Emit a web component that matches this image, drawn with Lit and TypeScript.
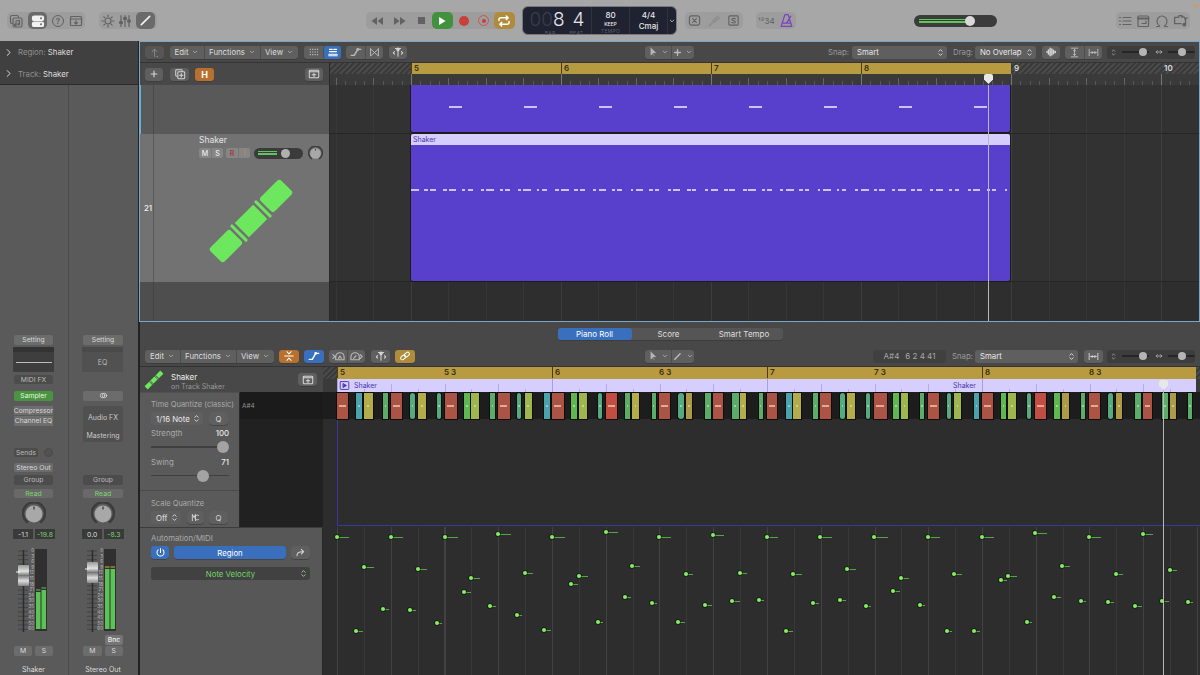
import { LitElement, html, css, svg, unsafeCSS } from "lit";
import { customElement } from "lit/decorators.js";

const util = unsafeCSS(
  Array.from({ length: 260 }, (_, i) => `.ml${i}{margin-left:${i}px}.w${i}{width:${i}px;flex:none}.mt${i}{margin-top:${i}px}`).join("")
);

type N = [number, number, string, number];
const notes: N[] = [
  [337,11,"r",537],[356,5.5,"t",631],[364,8.5,"y",567],[383,5,"g",609],[391,11,"r",537],[410,4.5,"tg",610],[418,7.5,"y",569],[437,4,"tg",623],
  [445,11.5,"r",537],[464,5.5,"bg",592],[471,8,"l",578],[490,5,"g",606],[498,11.5,"r",534],[517,4,"tg",615],[525,6.5,"l",573],[544,5.5,"t",630],
  [552,11.5,"r",537],[571,5.5,"bg",584],[579,7.5,"l",576],[598,4,"tg",622],[606,11,"rb",532],[625,5,"g",597],[632,7,"y",566],[652,3.5,"g",603],
  [659,11,"r",537],[678,5.5,"tg",622],[686,6,"br",574],[705,5.5,"g",605],[713,9.5,"r",535],[732,6.5,"g",601],[740,6,"y",573],[759,3.5,"g",600],
  [767,10,"r",537],[786,5.5,"t",631],[793,8,"y",574],[813,5,"g",603],[820,11,"r",537],[840,4.5,"tg",600],[847,7.5,"y",569],[866,4,"tg",606],
  [874,12.5,"r",537],[893,5.5,"bg",591],[901,7,"l",578],[920,4,"g",605],[928,11,"r",537],[947,3.5,"tg",631],[954,7,"l",574],[974,4.5,"t",631],
  [982,11,"r",537],[1001,4.5,"bg",580],[1008,8,"l",576],[1027,4,"tg",622],[1035,11,"rb",533],[1054,5.5,"bg",597],[1062,7,"br",566],[1081,4,"g",601],
  [1089,11,"r",537],[1108,5,"tg",602],[1116,6,"br",574],[1135,5.5,"g",606],[1143,9,"r",534],[1162,5.5,"g",601],[1170,5.5,"br",570],[1188,4,"g",602],
];
const S = 150 / 215;
const mapX = (x: number) => 81 + (x - 337) * S;
const scale = [0,3,6,9,12,15,18,21,24,30,35,40,45,50,60];

const i = (content: any, w = 12, vb = "0 0 14 14") => html`<svg class="ic" width=${w} height=${w} viewBox=${vb} fill="none" stroke="currentColor" stroke-width="1.2" stroke-linecap="round" stroke-linejoin="round">${content}</svg>`;

const ic = {
  library: i(svg`<rect x="1.5" y="1.5" width="8" height="8" rx="1.5"/><rect x="4" y="4" width="9" height="9" rx="1.5" fill="#9d9d9d"/><path d="M7 11V7l3.5-.7v3.7"/><circle cx="6.2" cy="11" r=".8" fill="currentColor"/><circle cx="9.7" cy="10.2" r=".8" fill="currentColor"/>`, 14),
  toggles: i(svg`<rect x="1.5" y="2" width="11" height="4.5" rx="1.6" fill="currentColor"/><rect x="1.5" y="8" width="11" height="4.5" rx="1.6" fill="currentColor"/><circle cx="10" cy="4.2" r="1" fill="#6a6a6a" stroke="none"/><circle cx="10" cy="10.2" r="1" fill="#6a6a6a" stroke="none"/>`, 14),
  tray: i(svg`<rect x="1.5" y="2.5" width="11" height="9" rx="1"/><path d="M1.5 5h11M7 6.5v3.5M5.5 8.7 7 10.2l1.5-1.5"/>`, 14),
  sun: i(svg`<circle cx="7" cy="7" r="3"/><path d="M7 1v1.6M7 11.4V13M1 7h1.6M11.4 7H13M2.8 2.8l1.1 1.1M10.1 10.1l1.1 1.1M2.8 11.2l1.1-1.1M10.1 3.9l1.1-1.1"/>`, 14),
  mixer: i(svg`<path d="M3 1.5v11M7 1.5v11M11 1.5v11"/><rect x="1.8" y="7.5" width="2.4" height="2" fill="currentColor"/><rect x="5.8" y="3.5" width="2.4" height="2" fill="currentColor"/><rect x="9.8" y="6" width="2.4" height="2" fill="currentColor"/>`, 14),
  pencil: i(svg`<path d="M2.5 11.5 11.5 2.5" stroke-width="1.8"/>`, 13),
  rew: i(svg`<path d="M7 3 1.5 7 7 11zM13 3 7.5 7l5.5 4z" fill="currentColor" stroke="none"/>`, 14),
  ffw: i(svg`<path d="M1 3l5.5 4L1 11zM7 3l5.5 4L7 11z" fill="currentColor" stroke="none"/>`, 14),
  stop: i(svg`<rect x="2.5" y="2.5" width="9" height="9" rx=".8" fill="currentColor" stroke="none"/>`, 11),
  play: i(svg`<path d="M3 1.5 12 7l-9 5.5z" fill="currentColor" stroke="none"/>`, 10),
  cycle: i(svg`<path d="M2 6.5V5.2C2 4.2 2.8 3.8 3.6 3.8H11M9.3 2l1.9 1.8L9.3 5.6M12 7.5v1.3c0 1-.8 1.4-1.6 1.4H3M4.7 12l-1.9-1.8L4.7 8.4" stroke-width="1.5"/>`, 14),
  xbox: i(svg`<path d="M3 2h8l1.5 1.5v7L11 12H3l-1.5-1.5v-7z"/><path d="M5 5l4 4M9 5l-4 4"/>`, 13),
  fork: i(svg`<path d="M2 12 6.5 7.5M6 6l2 2M7 5.5 11.5 2M8.5 7 12.5 4"/>`, 14),
  sbox: i(svg`<rect x="2" y="2" width="10" height="10" rx="1"/><path d="M9 5.2C8.5 4.6 5.2 4.3 5.2 5.8S9 7.2 9 8.6 6 9.8 5 9"/>`, 13),
  metro: i(svg`<path d="M5.5 1.5h3L12 12.5H2zM3.5 9.5h7M7 9.5 11 3"/>`, 15),
  list: i(svg`<path d="M5 3.5h8M5 7h8M5 10.5h8M1.5 3.5h1M1.5 7h1M1.5 10.5h1"/>`, 14),
  panel: i(svg`<rect x="2" y="2" width="10.5" height="10.5" rx="1"/><path d="M2 4.5h10.5" stroke-width="2"/><path d="M6 9.5h4V7"/>`, 14),
  loops: i(svg`<path d="M4 12.5h-2.5M12.5 12.5H10M4.6 12C3 11 2 9.500 2 7.500 2 4.500 4.200 2 7 2s5 2.500 5 5.500c0 2-1 3.500-2.600 4.500"/>`, 14),
  browser: i(svg`<path d="M1.500 4h4V2.500h3V4M1.500 4v6h6"/><circle cx="10.500" cy="10.800" r="1.200" fill="currentColor"/><path d="M11.700 10.800V5l1.500-.5"/><path d="M8 3.500c2-.5 3 .5 3 2" />`, 15),
  up: i(svg`<path d="M7 12V3M4 6l3-3.500L10 6"/><path d="M9.500 12H11" />`, 11),
  grid: i(svg`<path d="M2 4h10M2 7h10M2 10h10" stroke-dasharray="1.400 1.400" stroke-width="1.300" stroke-linecap="butt"/>`, 12),
  lines: i(svg`<path d="M2 9.500h10M2 11.500h10" stroke-width="1.200"/><path d="M3 4h3M8 4h3M3 6.500h8" stroke-width="1.600"/>`, 12),
  auto: i(svg`<path d="M1.500 11H5L9 4h3.500" stroke-width="1.600"/><circle cx="9" cy="4" r="1" fill="currentColor"/>`, 12),
  flex: i(svg`<path d="M2 2.500v9L7 7 2 2.500ZM12 2.500v9L7 7l5-4.500Z"/>`, 11),
  catch: i(svg`<path d="M7 2v10M4 3h6M3 6.500 1.500 8 3 9.500M11 6.500 12.500 8 11 9.500"/><circle cx="7" cy="4" r="1.400" fill="currentColor"/>`, 12),
  arrow: i(svg`<path d="M4 1.500v10l2.700-2.500 2 3.500M4 1.500l7 6.500H7" fill="currentColor" stroke-width=".6"/>`, 10),
  cross: i(svg`<path d="M7 2.500v9M2.500 7h9" stroke-width="2"/>`, 9),
  pen2: i(svg`<path d="M2.500 11.500 10 4" stroke-width="2"/>`, 10),
  chev: i(svg`<path d="M4 5.500 7 8.500l3-3" stroke-width="1.300"/>`, 8),
  updown: i(svg`<path d="M4.500 5 7 2.500 9.500 5M4.500 9 7 11.500 9.500 9" stroke-width="1.300"/>`, 9),
  right: i(svg`<path d="M5 2.500 9.500 7 5 11.500" stroke-width="1.500"/>`, 9),
  plus: i(svg`<path d="M7 3v8M3 7h8" stroke-width="1.600"/>`, 10),
  dup: i(svg`<rect x="2" y="2" width="7.500" height="7.500" rx="1"/><rect x="4.500" y="4.500" width="8" height="8" rx="1" fill="#5f5f5f"/><path d="M8.500 6.500v4M6.500 8.500h4"/>`, 12),
  addbox: i(svg`<rect x="1.500" y="2.500" width="11" height="9" rx="1"/><path d="M1.500 4.500h11M7 6v4M5 8h4"/>`, 12),
  midi: i(svg`<path d="M1 5l2 2-2 2M4 10.500V7.500a4.500 4.500 0 0 1 9 0v3H4zM7 9l1.500-2.500L10 9"/>`, 13),
  midi2: i(svg`<path d="M1 10.500V7.500a4.500 4.500 0 0 1 9 0v3H1zM4 9l2.500-3M11 5l2 2-2 2"/>`, 13),
  fit: i(svg`<path d="M1.500 3v8M12.500 3v8M3.500 7h7M8.500 5.500 10 7 8.500 8.500M5.500 5.500 4 7l1.500 1.500" />`, 11),
  vfit: i(svg`<path d="M3 1.500h8M3 12.500h8M7 3v8M5.500 5 7 3.500 8.500 5M5.500 9 7 10.500 8.500 9" />`, 11),
  wave: i(svg`<path d="M2 7h.5M4 4.500v5M6 2.500v9M8 3.500v7M10 5v4M12 6.500v1" stroke-width="1.700"/>`, 12),
  vzoom: i(svg`<path d="M5 5 7 3l2 2M5 9l2 2 2-2" />`, 9),
  hzoom: i(svg`<path d="M5 5 3 7l2 2M9 5l2 2-2 2M3 7h8"/>`, 10),
  compress: i(svg`<path d="M2 7h10M4.500 2 7 4.500 9.500 2M4.500 12 7 9.500 9.500 12" />`, 12),
  link: i(svg`<rect x="1.500" y="6.500" width="6.500" height="4" rx="2" transform="rotate(-40 5 8.500)"/><rect x="6" y="3.500" width="6.500" height="4" rx="2" transform="rotate(-40 9 5.500)"/>`, 12),
  power: i(svg`<path d="M7 2v5M4 3.700a4.500 4.500 0 1 0 6 0" stroke-width="1.300"/>`, 11),
  share: i(svg`<path d="M2.500 11c0-3.500 2.500-5 7-5M8 3l3 3-3 3" stroke-width="1.300"/>`, 11),
  scaleq: i(svg`<path d="M3 11V3l2 4 2-4v8" /><path d="M11 4.500a3 3 0 1 0 0 5" stroke-dasharray="1 1"/>`, 11),
  region: i(svg`<rect x="1.500" y="2" width="11" height="10" rx="1"/><path d="M5.500 4.700 9.500 7l-4 2.300z" fill="currentColor"/>`, 11),
};

const shaker = (size: number) => html`<svg class="shk" width=${size} height=${size} viewBox="-45 -45 90 90"><g fill="#6de85e" transform="rotate(-45)">
  <rect x="-50" y="-10" width="29" height="20" rx="3"/><rect x="-18.500" y="-11.500" width="3" height="23" rx="1.500"/>
  <rect x="-13" y="-10" width="26" height="20"/><rect x="15.500" y="-11.500" width="3" height="23" rx="1.500"/>
  <rect x="21" y="-10" width="29" height="20" rx="3"/></g></svg>`;

const knob = (s: number) => html`<svg width=${s} height=${s} viewBox="0 0 24 24"><path d="M6 20.500A11 11 0 1 1 18 20.500" fill="none" stroke="#3c3c3c" stroke-width="2.500"/><circle cx="12" cy="12" r="8.500" fill="#a8a8a8"/><path d="M12 4.500v3" stroke="#333" stroke-width="1.200"/></svg>`;

@customElement("app-root")
export class AppRoot extends LitElement {
  static styles = [util, css`
    :host{display:block;width:1200px;height:675px;overflow:hidden;background:#2d2d2d;font-family:Inter,"Liberation Sans",sans-serif;font-size:8.500px;color:#e4e4e4;-webkit-font-smoothing:antialiased}
    *{box-sizing:border-box}
    svg{display:block;flex:none}
    .top{height:41px;background:#a7a7a7;display:flex;align-items:center;color:#626262;position:relative}
    .tg{height:17px;background:#9d9d9d;border-radius:5px;display:flex;align-items:center;justify-content:space-around;flex:none}
    .ti{height:17px;display:flex;align-items:center;justify-content:center;border-radius:5px;flex:none}
    .sel{background:#6a6a6a;color:#f2f2f2}
    .green{background:#43913f;color:#fff}.gold{background:#b08b3c;color:#fff}
    .q{width:12px;height:12px;border:1.200px solid #626262;border-radius:50%;font-size:8px;display:flex;align-items:center;justify-content:center;font-weight:600}
    .rec{width:10px;height:10px;border-radius:50%;background:#c9403a}
    .cap{width:11px;height:11px;border-radius:50%;border:1.200px solid #d2544c;display:flex;align-items:center;justify-content:center}
    .cap i{width:4px;height:4px;border-radius:50%;background:#c9403a;display:block}
    .lcd{height:29px;background:#1f2230;border:1px solid #77797f;border-radius:6px;display:flex;flex:none;color:#e6e6ea;position:relative}
    .lcd .sec{display:flex;flex-direction:column;align-items:center;justify-content:flex-start;border-right:1px solid #30333f;padding-top:3px;flex:none}
    .lcd .big{display:flex;font-size:19px;font-weight:300;line-height:20px;height:21px}
    .dim{color:#3a3d4d}
    .lab{font-size:5px;letter-spacing:.3px;color:#5a5d6c;line-height:6px}
    .lcd .t{font-size:8px;font-weight:500;line-height:10px}
    .lcd .k{font-size:5px;font-weight:500;line-height:8px}
    .lcd .chev{display:flex;align-items:center;flex:1;justify-content:center;color:#ddd}
    .nums{font-size:8px;letter-spacing:.2px}
    .vol{height:12px;background:#3b3b3b;border-radius:6px;position:relative;flex:none;padding:4px 0 0 5px}
    .vol b{display:block;height:1.500px;background:#62c45c;margin-bottom:1px}
    .vol .kn{position:absolute;border-radius:50%;background:#d8d8d8;width:10px;height:10px;top:1px;left:51px}
    .orange{position:absolute;right:3px;top:4px;width:3px;height:3px;border-radius:50%;background:#e8962e}

    .body{display:grid;grid-template-columns:139px 1061px;height:634px}
    .left{display:flex;flex-direction:column;background:#5a5a5a;border-right:1px solid #222;width:139px}
    .rg{height:22px;background:#404040;display:flex;align-items:center;padding-left:4px;gap:5px;color:#ddd;flex:none;font-size:7.800px}
    .rg span span{color:#8f8f8f}
    .rg+.rg{border-bottom:1px solid #2c2c2c}
    .strips{flex:1;display:grid;grid-template-columns:69px 70px}
    .strip{padding:250px 15px 0 14px;display:flex;flex-direction:column;border-right:1px solid #4a4a4a;min-width:0}
    .strip+.strip{border-right:none;padding-left:14px;padding-right:16px}
    .sb{height:9.500px;background:#6c6c6c;border-radius:2px;font-size:6.800px;display:flex;align-items:center;justify-content:center;color:#d8d8d8;flex:none;white-space:nowrap}
    .sb.dk{background:#505050;color:#c8c8c8}
    .sb.sm{background:#4c4c4c;color:#bbb}
    .sb.gr{background:#48943f;color:#e8f5e0}
    .sb.rd{background:#696969;color:#79d86b}
    .slot{height:25px;background:#3e3e3e;display:flex;flex-direction:column;flex:none;margin:2px 0 0 -1px;width:41px}
    .slot u{height:5px;background:#333;margin-bottom:1px;display:block}
    .slot div{flex:1;display:flex;align-items:center;justify-content:center;font-size:7px;color:#bbb}
    .slot div s{display:block;width:36px;height:1px;background:#bbb}
    .slot.lt{background:#515151}.slot.lt u{background:#4a4a4a}
    .fx{height:36px;flex:none;display:flex;flex-direction:column}
    .fx .sb{border-radius:0;background:#6e6e6e}
    .fxb{height:36px;background:#505050;border-radius:2px;display:flex;flex-direction:column;justify-content:space-between;align-items:center;padding:7px 0 2px;font-size:7px;color:#c8c8c8;flex:none}
    .sends{height:21px;flex:none;display:flex;flex-direction:column;padding-top:6px}
    .sendr{display:flex;align-items:center;gap:3px}
    .dot{width:9px;height:9px;border-radius:50%;background:#525252;border:1px solid #4a4a4a;margin-left:3px}
    .gap{height:9.500px;flex:none}
    .knw{display:flex;justify-content:center;height:24px;margin-top:4px;flex:none}
    .vals{display:flex;gap:1.500px;margin-top:3px;margin-left:-1px;width:42px;flex:none}
    .vals span{flex:1;height:10px;background:#3a3a3a;font-size:6.800px;display:flex;align-items:center;justify-content:center;color:#ddd}
    .vals .g{color:#79d86b}
    .ms{display:flex;gap:3px;flex:none}
    .ms .sb{flex:1}
    .sname{font-size:7px;text-align:center;color:#ddd;margin-top:9px;white-space:nowrap;margin-left:-8px;margin-right:-8px}
    .fm{height:86px;margin-top:9px;flex:none;margin-left:-14px}
    .bncw{height:11px;display:flex;justify-content:flex-end;margin-top:1px;flex:none}
    .bnc{width:18px;background:#757575;color:#eee;font-weight:500}

    .right{display:flex;flex-direction:column;min-width:0}
    .arr{height:281px;border:1px solid #7ba6c8;display:flex;flex-direction:column;flex:none}
    .tb{display:flex;align-items:center;background:#484848;flex:none;color:#d8d8d8;font-size:7.800px}
    .arr .tb{height:21px;border-bottom:1px solid #343434;padding-left:5px}
    .b{height:13px;background:#5f5f5f;border-radius:3px;display:flex;align-items:center;justify-content:center;flex:none;color:#d5d5d5;box-shadow:0 .500px 0 #333}
    .b.dim2{color:#888;background:#555}
    .seg{display:flex;align-items:center;height:13px;background:#5f5f5f;border-radius:3px;flex:none;box-shadow:0 .500px 0 #333}
    .seg>*{height:13px;display:flex;align-items:center;justify-content:center;border-left:1px solid #4d4d4d;flex:none;color:#ddd;gap:3px;white-space:nowrap}
    .seg>*:first-child{border-left:none}
    .seg svg.ic{color:#bbb}
    .seg>.blue svg.ic{color:#fff}
    .blue{background:#3a6fbd;border-radius:3px;color:#fff}
    .b.blue{background:#3a6fbd;color:#fff}.b.or{background:#b8702f;color:#fff;font-weight:700;font-size:9px}.b.gd{background:#b08b3c;color:#fff}
    .lbl{color:#9a9a9a;flex:none;white-space:nowrap}
    .sel-box{height:13px;background:#5f5f5f;border-radius:3px;display:flex;align-items:center;justify-content:space-between;padding:0 2px 0 5px;flex:none;color:#e8e8e8;white-space:nowrap;font-size:7.800px}
    .zg{height:13px;background:#3d3d3d;border-radius:3px;display:flex;align-items:center;flex:none;color:#aaa;padding-left:2px}
    .tr{position:relative;height:2px;background:#262626;border-radius:1px;flex:none}
    .tr i{position:absolute;width:8px;height:8px;border-radius:50%;background:#b5b5b5;top:-3px}
    .ag{display:grid;grid-template-columns:190px 869px;grid-template-rows:22px 236px;flex:none}
    .th0{background:#484848;display:flex;align-items:center;padding-left:5px;border-right:1px solid #2a2a2a;color:#ddd}
    .trks{display:grid;grid-template-rows:49px 148px 39px;border-right:1px solid #2a2a2a}
    .t1{background:#595959;display:grid;grid-template-columns:1px 13px 1fr}
    .t1 .bar{background:#62b3de}
    .t1 .num{border-right:1px solid #4a4a4a}
    .t2{background:#727272;display:flex}
    .t2 .no{width:14px;flex:none;border-right:1px solid #5a5a5a;display:flex;align-items:center;justify-content:center;padding-left:3px;color:#eee;font-weight:500;font-size:8px}
    .t2 .cont{padding:1px 0 0 45px;display:flex;flex-direction:column}
    .t2 .hd{display:flex;align-items:center;margin-top:3px;height:10px}
    .mini{height:10px;background:#868686;display:flex;border-radius:2px;flex:none}
    .mini span{width:12px;font-size:7px;display:flex;align-items:center;justify-content:center;color:#eee;font-weight:500;border-left:1px solid #777}
    .mini span:first-child{border-left:none}
    .t2 .shk{margin:18px 0 0 7px}
    .t3{background:#4e4e4e;display:flex}
    .t3 i{width:14px;border-right:1px solid #454545;display:block}
    .tvol{height:11px;width:49px;background:#3b3b3b;border-radius:6px;position:relative;padding:3px 0 0 4px;flex:none;margin-left:4px}
    .tvol b{display:block;height:1.500px;width:19px;background:#62c45c;margin-bottom:1px}
    .tvol i{position:absolute;width:9px;height:9px;top:1px;left:27px;border-radius:50%;background:#b0b0b0}
    .rul{position:relative;background:#3a3a3a;display:flex;flex-direction:column;overflow:hidden}
    .hatch{height:11px;background:repeating-linear-gradient(135deg,#3a3a3a 0 2px,#4a4a4a 2px 4px);position:relative;flex:none}
    .goldb{position:absolute;background:#b89a41;top:0;bottom:0}
    .rl{position:absolute;top:0;font-size:8px;line-height:11px;font-weight:600;color:#d8d8d8;padding-left:2px;border-left:1px solid #3c3c3c;height:11px}
    .rl.on{color:#3a2e10;border-left-color:#4a3c16}
    .ticks{flex:1;background:
      repeating-linear-gradient(90deg,transparent 0 81px,#777 81px 82px,transparent 82px 150px),
      repeating-linear-gradient(90deg,transparent 0 6px,#646464 6px 7px,transparent 7px 37.5px) 0 100%/100% 7px no-repeat,
      repeating-linear-gradient(90deg,transparent 0 6px,#575757 6px 7px,transparent 7px 9.375px) 0 100%/100% 4px no-repeat}
    .tl{position:relative;background:
      repeating-linear-gradient(90deg,transparent 0 81px,#3d3d3d 81px 82px,transparent 82px 150px),
      repeating-linear-gradient(90deg,transparent 0 6px,#363636 6px 7px,transparent 7px 37.5px),
      #2e2e2e;display:grid;grid-template-rows:49px 148px 39px;overflow:hidden}
    .tl .shade{background:rgba(255,255,255,.02);border-bottom:1px solid #262626}
    .reg{position:absolute;left:81px;width:599px;background:#5840cc;border-radius:2px;overflow:hidden;box-shadow:0 0 0 1px #1c1c1c}
    .r1{top:0;height:47px;border-radius:0 0 2px 2px}.r2{top:49px;height:147px}
    .rhead{height:11px;background:#d6cefc;color:#4a37ad;font-size:7px;line-height:11px;padding-left:2px}
    .dash{position:absolute;height:1.500px;background:#cbc3f3}
    .ph{position:absolute;width:1px;background:#b8b8b8;z-index:3}
    .cap2{position:absolute;z-index:4;width:9px;height:10px;background:#e8e8e8;clip-path:polygon(0 0,100% 0,100% 55%,50% 100%,0 55%);border-radius:2px 2px 0 0}

    .ed{flex:1;display:flex;flex-direction:column;background:#484848;border-left:1px solid #222}
    .tabs{height:24px;display:flex;align-items:center;justify-content:center;flex:none}
    .tabs .seg{height:12px;background:#555}
    .tabs .seg>*{height:12px;font-size:8px;border-left:none}
    .tabs .seg>.blue{color:#fff}
    .ed .tb{height:21px;padding-left:5px;border-bottom:1px solid #333}
    .posd{height:13px;background:#404040;border-radius:3px;display:flex;align-items:center;justify-content:center;gap:6px;color:#a8a8a8;flex:none;font-size:8px}
    .eg{display:grid;grid-template-columns:100px 83px 877px;grid-template-rows:25px 135px 148px;position:relative;flex:none}
    .eh{grid-column:1/3;background:#484848;display:flex;align-items:center;padding-left:4px;position:relative}
    .eh .nm{margin-left:7px;display:flex;flex-direction:column;padding-top:3px}
    .eh .nm b{font-weight:400;color:#eee;line-height:10px;font-size:8px}
    .eh .nm span{font-size:7px;color:#999;line-height:9px}
    .eh .b{margin-left:auto;margin-right:6px;width:19px}
    .er{display:flex;flex-direction:column;position:relative;overflow:hidden;background:#3a3a3a}
    .er .hatch{height:12px}
    .band{height:13px;margin-left:14px;width:859px;background:
      repeating-linear-gradient(90deg,#a9a0dd 0 1px,transparent 1px 215px),
      repeating-linear-gradient(90deg,#b4aee0 0 1px,transparent 1px 53.75px) 0 100%/100% 8px no-repeat,
      repeating-linear-gradient(90deg,#b4aee0 0 1px,transparent 1px 26.875px) 0 100%/100% 3px no-repeat,
      #d6cefc;color:#4a37ad;font-size:7px;display:flex;align-items:center;padding-left:2px;position:relative}
    .band .ic{color:#4a37ad}
    .band .sn{margin-left:4px}
    .band .sn2{position:absolute;left:616px}
    .qp{background:#5a5a5a;padding:7px 0 0 11px;display:flex;flex-direction:column;color:#aaa;border-top:1px solid #505050;border-right:1px solid #2a2a2a;overflow:hidden}
    .qp>*{flex:none}
    .qp .ttl{font-size:7.500px;line-height:9px;white-space:nowrap}
    .qrow{display:flex;align-items:center;margin-top:3px;color:#ddd;font-size:7.800px}
    .kv{display:flex;justify-content:space-between;width:78px;line-height:10px;font-size:7.800px}
    .kv b{color:#e6e6e6;font-weight:500}
    .sl{position:relative;height:1.500px;width:78px;background:#3f3f3f;flex:none}
    .sl i{position:absolute;width:12px;height:12px;top:-5px;border-radius:50%;background:#a3a3a3;display:block}
    .qdiv{height:1px;background:#4a4a4a;margin-left:-11px;width:99px}
    .keys{background:#212121;display:flex;flex-direction:column}
    .keys div{height:27px;background:#1b1b1b;color:#8f8f8f;font-size:6.500px;display:flex;align-items:center;padding-left:2px}
    .roll{position:relative;background:#2d2d2d;overflow:hidden}
    .rtop{height:27px;background:#1d1d1d}
    .fr{position:absolute;left:14px;top:27px;right:0;height:107px;border:1px solid #3f35a0;border-width:0 0 1px 1px}
    .n{position:absolute;top:1px;height:26px;box-shadow:0 0 0 1px #0e0e0e}
    .n::after{content:"";position:absolute;left:36%;right:36%;top:12px;height:2px;background:rgba(255,255,255,.42)}
    .n.r{background:#ab5344}.n.rb{background:#c04e43}.n.t{background:#4aa3ab}.n.tg{background:#55aa80}.n.g{background:#5aac68}.n.bg{background:#5fb84f}.n.y{background:#b2ac4b}.n.l{background:#9fb54e}.n.br{background:#ad9a48}
    .n.r::after,.n.rb::after{left:18%;right:18%;background:rgba(255,215,200,.65)}
    .aut{grid-column:1/3;background:#575757;padding:5px 0 0 11px;display:flex;flex-direction:column;color:#aaa;border-right:1px solid #262626;border-top:1px solid #3c3c3c}
    .aut .ttl{font-size:7.800px;line-height:10px}
    .nv{height:13px;width:159px;margin-top:8px;background:#414141;border-radius:3px;display:flex;align-items:center;color:#72d565;position:relative;justify-content:center;font-size:7.800px}
    .nv svg{position:absolute;right:2px;color:#a5d99e}
    .vel{position:relative;overflow:hidden;background:
      repeating-linear-gradient(90deg,transparent 0 14px,#424242 14px 15px,transparent 15px 53.75px),
      repeating-linear-gradient(90deg,transparent 0 14px,#383838 14px 15px,transparent 15px 26.875px),
      #2d2d2d}
    .vl{position:absolute;height:1.200px;background:#58a24a}
    .vl::before{content:"";position:absolute;left:-2px;top:-1.400px;width:4px;height:4px;border-radius:50%;background:#82f05f;box-shadow:0 0 0 1px rgba(0,0,0,.35)}
  `];

  private strip1() {
    return html`<div class="strip">
      <div class="sb">Setting</div>
      <div class="slot"><u></u><div><s></s></div></div>
      <div class="sb sm mt3">MIDI FX</div>
      <div class="sb gr mt7">Sampler</div>
      <div class="fx mt5"><div class="sb">Compressor</div><div class="sb mt1">Channel EQ</div></div>
      <div class="sends"><div class="sendr"><div class="sb sm w24">Sends</div><div class="dot"></div></div></div>
      <div class="sb">Stereo Out</div>
      <div class="sb sm mt3">Group</div>
      <div class="sb rd mt4">Read</div>
      <div class="knw">${knob(24)}</div>
      <div class="vals"><span>-1.1</span><span class="g">-19.8</span></div>
      ${this.faderMeter(37, 39)}
      <div class="bncw"></div>
      <div class="ms"><div class="sb">M</div><div class="sb">S</div></div>
      <div class="sname">Shaker</div>
    </div>`;
  }
  private strip2() {
    return html`<div class="strip">
      <div class="sb">Setting</div>
      <div class="slot lt"><u></u><div>EQ</div></div>
      <div class="gap mt3"></div>
      <div class="sb mt7">${i(svg`<circle cx="5.500" cy="7" r="3.500"/><circle cx="8.500" cy="7" r="3.500"/>`, 9)}</div>
      <div class="fxb mt5"><span>Audio FX</span><span>Mastering</span></div>
      <div class="sends"></div>
      <div class="gap"></div>
      <div class="sb sm mt3">Group</div>
      <div class="sb rd mt4">Read</div>
      <div class="knw">${knob(24)}</div>
      <div class="vals"><span>0.0</span><span class="g">-8.3</span></div>
      ${this.faderMeter(60, 60)}
      <div class="bncw"><div class="sb bnc">Bnc</div></div>
      <div class="ms"><div class="sb">M</div><div class="sb">S</div></div>
      <div class="sname">Stereo Out</div>
    </div>`;
  }
  private faderMeter(a: number, b: number) {
    const capY = a === 37 ? 17 : 14;
    const ticks = Array.from({ length: 19 }, (_, k) => 3 + k * 4.35);
    return html`<svg class="fm" width="55" height="86" viewBox="0 0 55 86">
      ${ticks.map((y) => svg`<path d="M18 ${y}h10" stroke="#3c3c3c" stroke-width=".8"/>`)}
      <path d="M23.500 2v82" stroke="#2c2c2c" stroke-width="1.500"/>
      <defs><linearGradient id="fc" x1="0" y1="0" x2="0" y2="1"><stop offset="0" stop-color="#999"/><stop offset=".3" stop-color="#e0e0e0"/><stop offset=".5" stop-color="#777"/><stop offset=".75" stop-color="#ddd"/><stop offset="1" stop-color="#888"/></linearGradient></defs>
      <rect x="18" y=${capY} width="11" height="21" rx="1" fill="url(#fc)"/>
      <path d="M16 ${capY + 7}h4" stroke="#eee"/>
      <rect x="35" y="1" width="12" height="82" fill="#303030"/>
      <rect x="36" y=${81 - a} width="4.500" height=${a} fill="#5cc456"/>
      <rect x="41.500" y=${81 - b} width="4.500" height=${b} fill="#5cc456"/>
      <path d="M36 ${79 - a}h4.500M41.500 ${79 - b}h4.500" stroke=${a > 50 ? "#d8b23e" : "#5cc456"} stroke-width="1"/>
      ${scale.map((s, k) => svg`<text x="34" y=${4 + k * 5.6} text-anchor="end" font-size="4.500" fill="#bdbdbd">${s}</text>`)}
    </svg>`;
  }
  private zoomGroup() {
    return html`<div class="zg w88">
      <span>${ic.vzoom}</span><div class="tr w27 ml4"><i style="left:17px"></i></div>
      <span class="ml5">${ic.hzoom}</span><div class="tr w27 ml4"><i style="left:10px"></i></div>
    </div>`;
  }
  private toolGroup(b: any) {
    return html`<div class="seg w49"><span class="w26">${ic.arrow}${ic.chev}</span><span class="w23">${b}${ic.chev}</span></div>`;
  }

  render() {
    return html`
    <div class="top">
      <div class="tg w78 ml7">
        <div class="ti">${ic.library}</div><div class="ti sel w19">${ic.toggles}</div>
        <div class="ti"><div class="q">?</div></div><div class="ti">${ic.tray}</div>
      </div>
      <div class="tg w58 ml14">
        <div class="ti">${ic.sun}</div><div class="ti">${ic.mixer}</div><div class="ti sel w19">${ic.pencil}</div>
      </div>
      <div class="tg w149 ml209">
        <div class="ti w22">${ic.rew}</div><div class="ti w22">${ic.ffw}</div><div class="ti w20">${ic.stop}</div>
        <div class="ti green w21">${ic.play}</div><div class="ti w20"><div class="rec"></div></div>
        <div class="ti w19"><div class="cap"><i></i></div></div><div class="ti gold w21">${ic.cycle}</div>
      </div>
      <div class="lcd w155 ml7">
        <div class="sec w69"><div class="big"><span class="dim">00</span><span>8</span><span class="ml8">4</span></div>
          <div class="lab"><span class="ml14">BAR</span><span class="ml14">BEAT</span></div></div>
        <div class="sec w38"><div class="t">80</div><div class="k">KEEP</div><div class="lab">TEMPO</div></div>
        <div class="sec w38"><div class="t">4/4</div><div class="t mt1">Cmaj</div></div>
        <div class="chev">${ic.chev}</div>
      </div>
      <div class="tg w58 ml8"><div class="ti">${ic.xbox}</div><div class="ti" style="color:#8a8a8a">${ic.fork}</div><div class="ti">${ic.sbox}</div></div>
      <div class="tg w40 ml13"><div class="ti nums">¹²34</div><div class="ti" style="color:#7a45c0">${ic.metro}</div></div>
      <div class="vol w83 ml118"><b class="w48"></b><b class="w48"></b><div class="kn"></div></div>
      <div class="tg w74 ml119"><div class="ti">${ic.list}</div><div class="ti">${ic.panel}</div><div class="ti">${ic.loops}</div><div class="ti">${ic.browser}</div></div>
      <div class="orange"></div>
    </div>
    <div class="body">
      <div class="left">
        <div class="rg">${ic.right}<span><span>Region:</span> Shaker</span></div>
        <div class="rg">${ic.right}<span><span>Track:</span> Shaker</span></div>
        <div class="strips">${this.strip1()}${this.strip2()}</div>
      </div>
      <div class="right">
        <div class="arr">
          <div class="tb">
            <div class="b dim2 w19">${ic.up}</div>
            <div class="seg ml6"><span class="w34">Edit ${ic.chev}</span><span class="w56">Functions ${ic.chev}</span><span class="w38">View ${ic.chev}</span></div>
            <div class="seg w37 ml6"><span class="w19">${ic.grid}</span><span class="w18 blue">${ic.lines}</span></div>
            <div class="seg w37 ml5"><span class="w19">${ic.auto}</span><span class="w18">${ic.flex}</span></div>
            <div class="b w18 ml6">${ic.catch}</div>
            <div class="ml238"></div>
            ${this.toolGroup(ic.cross)}
            <span class="lbl ml134 w20">Snap:</span>
            <div class="sel-box w95 ml4"><span>Smart</span>${ic.updown}</div>
            <span class="lbl ml6 w19">Drag:</span>
            <div class="sel-box w61 ml3"><span>No Overlap</span>${ic.updown}</div>
            <div class="b w18 ml6">${ic.wave}</div>
            <div class="seg w37 ml5"><span class="w19">${ic.vfit}</span><span class="w18">${ic.fit}</span></div>
            <div class="ml5">${this.zoomGroup()}</div>
          </div>
          <div class="ag">
            <div class="th0">
              <div class="b w18">${ic.plus}</div><div class="b w19 ml7">${ic.dup}</div><div class="b or w19 ml6">H</div><div class="b w18 ml91">${ic.addbox}</div>
            </div>
            <div class="rul">
              <div class="hatch">
                <div class="goldb" style="left:81px;width:600px"></div>
                ${[5,6,7,8,9,10].map((n, k) => html`<div class="rl ${n < 9 ? "on" : ""}" style="left:${81 + k * 150}px">${n}</div>`)}
              </div>
              <div class="ticks"></div>
            </div>
            <div class="trks">
              <div class="t1"><div class="bar"></div><div class="num"></div><div></div></div>
              <div class="t2"><div class="no">21</div>
                <div class="cont">
                  <div>Shaker</div>
                  <div class="hd">
                    <div class="mini"><span>M</span><span>S</span></div>
                    <div class="mini ml3"><span style="color:#a33">R</span><span style="color:#c08a3a">I</span></div>
                    <div class="tvol"><b></b><b></b><i></i></div>
                    <div class="ml5">${knob(15)}</div>
                  </div>
                  ${shaker(90)}
                </div>
              </div>
              <div class="t3"><i></i></div>
            </div>
            <div class="tl">
              <div class="shade"></div><div class="shade"></div><div></div>
              <div class="reg r1">${[37.5,112.5,187.5,262.5,337.5,412.5,487.5,562.5].map((x) => html`<div class="dash" style="left:${x}px;top:21px;width:13px"></div>`)}</div>
              <div class="reg r2"><div class="rhead">Shaker</div>
                ${notes.map((n) => html`<div class="dash" style="left:${(mapX(n[0]) - 81).toFixed(1)}px;top:55px;width:${(n[1] * S).toFixed(1)}px"></div>`)}
              </div>
              <div class="ph" style="left:658px;top:0;bottom:0"></div>
            </div>
          </div>
        </div>
        <div class="ed">
          <div class="tabs"><div class="seg"><span class="blue w74">Piano Roll</span><span class="w74">Score</span><span class="w77">Smart Tempo</span></div></div>
          <div class="tb">
            <div class="seg"><span class="w35">Edit ${ic.chev}</span><span class="w56">Functions ${ic.chev}</span><span class="w38">View ${ic.chev}</span></div>
            <div class="b or w20 ml5">${ic.compress}</div>
            <div class="b blue w20 ml5">${ic.auto}</div>
            <div class="seg w36 ml5"><span class="w18">${ic.midi}</span><span class="w18">${ic.midi2}</span></div>
            <div class="b w19 ml6">${ic.catch}</div>
            <div class="b gd w20 ml5">${ic.link}</div>
            <div class="ml230"></div>
            ${this.toolGroup(ic.pen2)}
            <div class="posd w73 ml179"><span>A#4</span><span>6 2 4 41</span></div>
            <span class="lbl ml6 w20">Snap:</span>
            <div class="sel-box w103 ml3"><span>Smart</span>${ic.updown}</div>
            <div class="b w19 ml6">${ic.fit}</div>
            <div class="ml4">${this.zoomGroup()}</div>
          </div>
          <div class="eg">
            <div class="eh">${shaker(20)}<div class="nm"><b>Shaker</b><span>on Track Shaker</span></div><div class="b">${ic.addbox}</div></div>
            <div class="er">
              <div class="hatch">
                <div class="goldb" style="left:14px;width:859px"></div>
                ${([["5",0,1],["5 3",104,0],["6",215,1],["6 3",319,0],["7",430,1],["7 3",534,0],["8",645,1],["8 3",749,0]] as [string,number,number][]).map(([t, x, bar]) => html`<div class="rl on" style="left:${14 + x}px;${bar ? "" : "border-left-color:transparent"}">${t}</div>`)}
              </div>
              <div class="band">${ic.region}<span class="sn">Shaker</span><span class="sn2">Shaker</span></div>
            </div>
            <div class="qp">
              <div class="ttl">Time Quantize (classic)</div>
              <div class="qrow"><div class="sel-box w52"><span>1/16 Note</span>${ic.updown}</div><div class="b w19 ml6">Q</div></div>
              <div class="kv mt3"><span>Strength</span><b>100</b></div>
              <div class="sl mt8"><i style="left:66px"></i></div>
              <div class="kv mt9"><span>Swing</span><b>71</b></div>
              <div class="sl mt8"><i style="left:46px"></i></div>
              <div class="qdiv mt14"></div>
              <div class="ttl mt8">Scale Quantize</div>
              <div class="qrow mt1"><div class="sel-box w30"><span>Off</span>${ic.updown}</div><div class="b w17 ml6">${ic.scaleq}</div><div class="b w19 ml5">Q</div></div>
            </div>
            <div class="keys"><div>A#4</div></div>
            <div class="roll">
              <div class="rtop"></div><div class="fr"></div>
              ${notes.map((n) => html`<div class="n ${n[2]}" style="left:${n[0] - 323}px;width:${n[1]}px"></div>`)}
            </div>
            <div class="aut">
              <div class="ttl">Automation/MIDI</div>
              <div class="qrow"><div class="b blue w18">${ic.power}</div><div class="b blue w112 ml5">Region</div><div class="b w19 ml5">${ic.share}</div></div>
              <div class="nv">Note Velocity ${ic.updown}</div>
            </div>
            <div class="vel">
              ${notes.map((n) => html`<div class="vl" style="left:${n[0] - 323}px;top:${n[3] - 527 - 0.5}px;width:${n[1] + 1}px"></div>`)}
            </div>
            <div class="ph" style="left:1023px;top:13px;bottom:0"></div>
            <div class="cap2" style="left:1019px;top:13px"></div>
          </div>
        </div>
      </div>
    </div>
    <div class="cap2" style="left:984px;top:74px"></div>
    `;
  }
}
